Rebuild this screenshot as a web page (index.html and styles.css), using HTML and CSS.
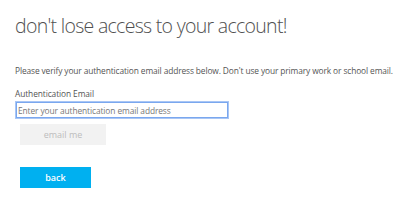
FILE: index.html
```html
<!DOCTYPE html>
<html lang="en">
<head>
    <meta charset="UTF-8">
    <title>Verify email</title>
    <link rel="stylesheet" href="styles.css">
</head>
<body>
<div class="page">
    <h1 class="title">don't lose access to your account!</h1>
    <p class="intro">Please verify your authentication email address below. Don't use your primary work or school email.</p>
    <label class="label" for="email">Authentication Email</label>
    <input class="field" id="email" type="text" placeholder="Enter your authentication email address">
    <div class="actions">
        <button class="btn btn-send" disabled>email me</button>
        <button class="btn btn-back">back</button>
    </div>
</div>
</body>
</html>
```

FILE: styles.css
```css
* {
    margin: 0;
    padding: 0;
    box-sizing: border-box;
}

body {
    background: #fff;
    font-family: "Open Sans", "Noto Sans", sans-serif;
    color: #555;
}

.page {
    padding: 12px 0 0 15px;
}

.title {
    font-size: 19.5px;
    font-weight: 300;
    line-height: 28px;
    color: #505050;
    letter-spacing: -0.7px;
}

.intro {
    margin-top: 25px;
    font-size: 8.4px;
    line-height: 12px;
    color: #555;
    white-space: nowrap;
    letter-spacing: -0.12px;
}

.label {
    display: block;
    margin-top: 11px;
    font-size: 8.4px;
    line-height: 12px;
    color: #555;
    letter-spacing: -0.1px;
}

.field {
    display: block;
    margin: 2px 0 0 1px;
    width: 212px;
    height: 16px;
    padding: 0 1px;
    border: 1px solid #7aa7ee;
    outline: 1px solid #a9c6f5;
    font-family: inherit;
    font-size: 8.4px;
    letter-spacing: -0.1px;
    color: #555;
}

.field::placeholder {
    color: #777;
}

.actions {
    display: flex;
    flex-direction: column;
    align-items: flex-start;
    padding-left: 5px;
}

.btn {
    border: none;
    font-family: inherit;
    font-size: 9px;
    height: 21px;
}

.btn-send {
    margin-top: 6px;
    width: 86px;
    background: #f2f2f2;
    color: #bdbdbd;
}

.btn-back {
    margin-top: 22px;
    width: 71px;
    background: #00b0f0;
    color: #fff;
    font-weight: 600;
}
```
